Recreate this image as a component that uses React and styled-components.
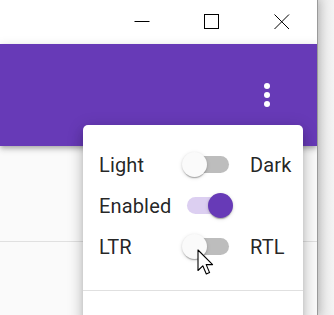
import React from 'react'
import styled, { createGlobalStyle } from 'styled-components'

const GlobalStyle = createGlobalStyle`
  html, body {
    margin: 0;
    padding: 0;
    background: #eeeeee;
    font-family: Roboto, 'Noto Sans', sans-serif;
    overflow: hidden;
  }
`

const Desktop = styled.div`
  width: 334px;
  height: 315px;
  overflow: hidden;
  background: linear-gradient(90deg, #e2e2e2 0px, #f4f4f4 17px);
  background-position: 317px 0;
  background-repeat: no-repeat;
  background-color: #f4f4f4;
`

const Window = styled.div`
  position: relative;
  width: 317px;
  height: 315px;
  display: flex;
  flex-direction: column;
  background: #fafafa;
  box-shadow: 1px 0 0 #9a9a9a, 3px 0 8px rgba(0, 0, 0, 0.18);
  overflow: hidden;
`

const TitleBar = styled.div`
  height: 44px;
  flex: none;
  background: #ffffff;
  display: flex;
  justify-content: flex-end;
`

const WinButton = styled.div`
  width: 70px;
  height: 44px;
  display: flex;
  align-items: center;
  justify-content: center;
`

const AppBar = styled.header`
  height: 102px;
  flex: none;
  background: #673ab7;
  display: flex;
  align-items: center;
  justify-content: flex-end;
  padding-right: 36px;
  box-shadow: 0 2px 4px -1px rgba(0, 0, 0, 0.2), 0 4px 5px 0 rgba(0, 0, 0, 0.12),
    0 1px 10px 0 rgba(0, 0, 0, 0.1);
  position: relative;
  z-index: 1;
`

const IconButton = styled.div`
  width: 28px;
  height: 30px;
  display: flex;
  align-items: center;
  justify-content: center;
`

const Content = styled.main`
  flex: 1;
  display: flex;
  flex-direction: column;
`

const Section = styled.section`
  height: 95px;
  border-bottom: 1px solid #e0e0e0;
`

const Menu = styled.div`
  position: absolute;
  left: 83px;
  top: 125px;
  width: 220px;
  height: 200px;
  background: #ffffff;
  border-radius: 5px;
  box-shadow: 0 5px 6px -3px rgba(0, 0, 0, 0.2), 0 8px 12px 1px rgba(0, 0, 0, 0.14),
    0 3px 16px 2px rgba(0, 0, 0, 0.12);
  z-index: 2;
  padding-top: 19px;
  box-sizing: border-box;
`

const Row = styled.div`
  height: 41px;
  display: grid;
  grid-template-columns: 73px 78px auto;
  align-items: center;
  padding-left: 16px;
`

const Label = styled.span`
  font-size: 20px;
  line-height: 24px;
  color: rgba(0, 0, 0, 0.87);
  letter-spacing: 0.15px;
`

const Switch = styled.span`
  position: relative;
  width: 72px;
  height: 41px;
  display: block;
`

const Track = styled.span`
  position: absolute;
  left: 15px;
  top: 12px;
  width: 42px;
  height: 17px;
  border-radius: 9px;
  background: ${(p) => (p.$on ? '#dccff1' : '#bdbdbd')};
`

const Thumb = styled.span`
  position: absolute;
  top: 8px;
  left: ${(p) => (p.$on ? 36 : 10)}px;
  width: 25px;
  height: 25px;
  border-radius: 50%;
  background: ${(p) => (p.$on ? '#673ab7' : '#fafafa')};
  box-shadow: 0 2px 1px -1px rgba(0, 0, 0, 0.2), 0 1px 2px 0 rgba(0, 0, 0, 0.14),
    0 1px 4px 0 rgba(0, 0, 0, 0.12);
`

const Divider = styled.hr`
  margin: 23px 0 0;
  border: none;
  border-top: 1px solid #e0e0e0;
`

const Cursor = styled.svg`
  position: absolute;
  left: 197px;
  top: 249px;
  z-index: 3;
`

const Toggle = ({ on }) => (
  <Switch>
    <Track $on={on} />
    <Thumb $on={on} />
  </Switch>
)

const rows = [
  { id: 1, left: 'Light', right: 'Dark', on: false },
  { id: 2, left: 'Enabled', right: '', on: true },
  { id: 3, left: 'LTR', right: 'RTL', on: false },
]

const App = () => {
  return (
    <>
      <GlobalStyle />
      <Desktop>
        <Window>
          <TitleBar>
            <WinButton>
              <svg width='16' height='16' viewBox='0 0 16 16'>
                <path d='M0.5 7.5H15.5' stroke='#000' strokeWidth='1' />
              </svg>
            </WinButton>
            <WinButton>
              <svg width='16' height='16' viewBox='0 0 16 16'>
                <rect x='0.5' y='0.5' width='14' height='14' fill='none' stroke='#000' strokeWidth='1' />
              </svg>
            </WinButton>
            <WinButton>
              <svg width='16' height='16' viewBox='0 0 16 16'>
                <path d='M0.5 0.5L15 15M15 0.5L0.5 15' stroke='#000' strokeWidth='1' />
              </svg>
            </WinButton>
          </TitleBar>
          <AppBar>
            <IconButton>
              <svg width='8' height='26' viewBox='0 0 8 26'>
                <circle cx='4' cy='4' r='3' fill='#fff' />
                <circle cx='4' cy='13' r='3' fill='#fff' />
                <circle cx='4' cy='22' r='3' fill='#fff' />
              </svg>
            </IconButton>
          </AppBar>
          <Content>
            <Section />
          </Content>
          <Menu>
            {rows.map((r) => (
              <Row key={r.id}>
                <Label>{r.left}</Label>
                <Toggle on={r.on} />
                <Label>{r.right}</Label>
              </Row>
            ))}
            <Divider />
          </Menu>
          <Cursor width='20' height='28' viewBox='0 0 20 28'>
            <path
              d='M1 1V21.5L5.8 16.8L9.3 25L12.6 23.6L9.2 15.6H15.6Z'
              fill='#fff'
              stroke='#000'
              strokeWidth='1.1'
              strokeLinejoin='round'
            />
          </Cursor>
        </Window>
      </Desktop>
    </>
  )
}

export default App
